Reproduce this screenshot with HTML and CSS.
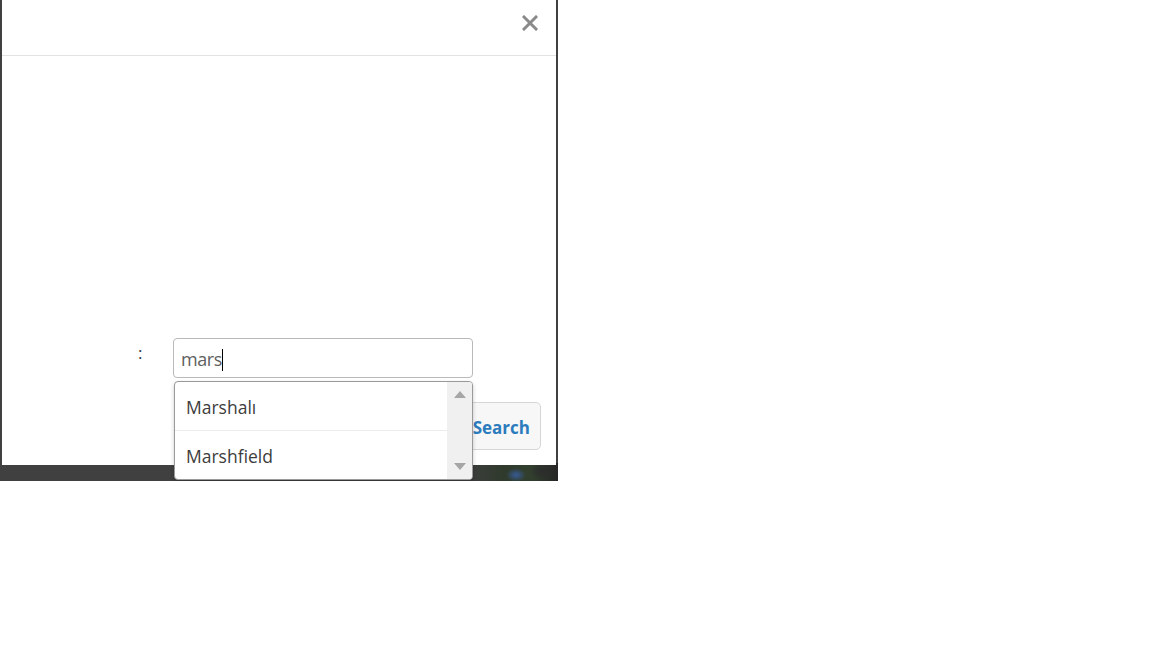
FILE: index.html
```html
<!DOCTYPE html>
<html>
<head>
<meta charset="utf-8">
<link rel="stylesheet" href="styles.css">
</head>
<body>
<div class="backdrop">
  <div class="modal">
    <div class="modal-header">
      <span class="close" aria-label="Close">
        <svg width="16" height="16" viewBox="0 0 16 16"><path d="M2 2 L14 14 M14 2 L2 14" stroke="#8a8a8a" stroke-width="3" stroke-linecap="square"/></svg>
      </span>
    </div>
    <div class="modal-body">
      <div class="form-row">
        <label class="label">:</label>
        <div class="field">
          <div class="input">mars<span class="caret"></span></div>
          <div class="dropdown">
            <ul class="list">
              <li class="item">Marshalı</li>
              <li class="item">Marshfield</li>
            </ul>
            <div class="scrollbar">
              <span class="arrow up"></span>
              <span class="arrow down"></span>
            </div>
          </div>
        </div>
      </div>
      <div class="actions">
        <button class="btn">Search</button>
      </div>
    </div>
  </div>
  <div class="map"></div>
</div>
</body>
</html>
```

FILE: styles.css
```css
html, body {
  margin: 0;
  padding: 0;
  background: #ffffff;
  font-family: "Open Sans", "Noto Sans", sans-serif;
}
.backdrop {
  position: relative;
  width: 558px;
  height: 481px;
  background: #404040;
  overflow: hidden;
}
.modal {
  position: relative;
  z-index: 1;
  margin-left: 2px;
  width: 554px;
  height: 465px;
  background: #ffffff;
  display: flex;
  flex-direction: column;
}
.modal-header {
  height: 56px;
  border-bottom: 1px solid #e2e2e2;
  display: flex;
  justify-content: flex-end;
  align-items: flex-start;
  padding-right: 18px;
  box-sizing: border-box;
}
.close {
  margin-top: 15px;
  width: 16px;
  height: 16px;
  display: block;
}
.close svg { display: block; }
.modal-body {
  padding-top: 282px;
  display: flex;
  flex-direction: column;
}
.form-row {
  display: flex;
  align-items: flex-start;
}
.label {
  width: 171px;
  box-sizing: border-box;
  padding-left: 136px;
  padding-top: 2px;
  font-size: 17px;
  line-height: 26px;
  color: #333;
}
.field {
  position: relative;
  width: 300px;
}
.input {
  height: 40px;
  box-sizing: border-box;
  border: 1px solid #b9b9b9;
  border-radius: 4px;
  padding: 0 7px;
  font-size: 18px;
  line-height: 40px;
  color: #606060;
  letter-spacing: -0.4px;
}
.caret {
  display: inline-block;
  width: 1px;
  height: 22px;
  background: #000;
  vertical-align: -5px;
}
.dropdown {
  position: absolute;
  z-index: 5;
  left: 1px;
  top: 43px;
  width: 299px;
  height: 99px;
  box-sizing: border-box;
  border: 1px solid #9a9a9a;
  border-radius: 4px;
  background: #fff;
  box-shadow: 0 2px 4px rgba(0,0,0,0.2);
  display: flex;
  overflow: hidden;
}
.list {
  list-style: none;
  margin: 0;
  padding: 0;
  flex: 1;
}
.item {
  height: 48px;
  box-sizing: border-box;
  padding-left: 11px;
  font-size: 17.5px;
  line-height: 51px;
  color: #3c3c3c;
}
.item + .item {
  border-top: 1px solid #ececec;
}
.scrollbar {
  width: 25px;
  background: #f0f0f0;
  display: flex;
  flex-direction: column;
  justify-content: space-between;
  align-items: center;
  padding: 9px 0 9px;
  box-sizing: border-box;
}
.arrow {
  width: 0;
  height: 0;
  border-left: 6px solid transparent;
  border-right: 6px solid transparent;
}
.arrow.up { border-bottom: 7px solid #a6a6a6; }
.arrow.down { border-top: 7px solid #a6a6a6; }
.actions {
  display: flex;
  justify-content: flex-end;
  padding-right: 15px;
  margin-top: 24px;
}
.btn {
  width: 80px;
  height: 48px;
  box-sizing: border-box;
  border: 1px solid #d6d6d6;
  border-radius: 5px;
  background: #f7f7f7;
  font-family: "Open Sans", "Noto Sans", sans-serif;
  font-weight: 700;
  font-size: 17px;
  color: #2b7bbd;
  text-align: right;
  padding: 2px 10px 0 0;
}
.map {
  position: absolute;
  right: 0;
  bottom: 0;
  width: 90px;
  height: 18px;
  background:
    radial-gradient(ellipse 10px 7px at 48px 12px, rgba(58,98,176,0.8) 0, transparent 100%),
    radial-gradient(ellipse 14px 8px at 75px 8px, #2c2c2c 0, transparent 100%),
    linear-gradient(90deg, #3d3d3d, #2f3a2c 40%, #323f2e 70%, #262626);
}
```
